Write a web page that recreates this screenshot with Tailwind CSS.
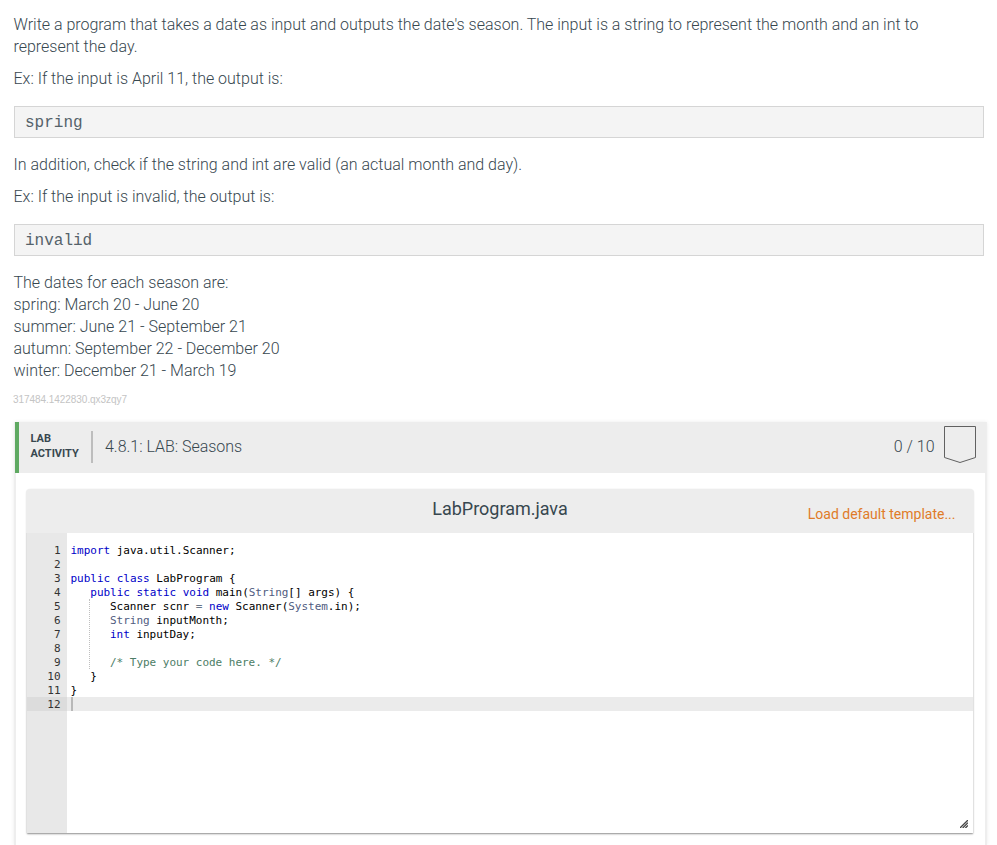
<!DOCTYPE html>
<html lang="en">
<head>
  <meta charset="UTF-8">
  <meta name="viewport" content="width=device-width, initial-scale=1.0">
  <title>4.8.1: LAB: Seasons</title>
  <script src="https://cdn.jsdelivr.net/npm/@tailwindcss/browser@4"></script>
</head>
<body class="bg-white h-[845px] overflow-hidden font-['Roboto',sans-serif] font-light text-base leading-[22px] text-[#37474f]">

  <!-- INSTRUCTIONS -->
  <section class="pt-[14px] pl-[14px] pr-[13px]">
    <p class="mb-2.5 -ml-[0.5px] tracking-[-0.01px]">Write a program that takes a date as input and outputs the date's season. The input is a string to represent the month and an int to<br>represent the day.</p>
    <p class="-ml-[0.5px]">Ex: If the input is April 11, the output is:</p>
    <pre class="my-4 h-8 border border-[#d5d5d5] bg-[#f4f4f4] px-2.5 leading-8 font-normal text-[#55626a] font-['Liberation_Mono',monospace]">spring</pre>
    <p class="mb-2.5 -ml-[0.5px] tracking-[-0.01px]">In addition, check if the string and int are valid (an actual month and day).</p>
    <p class="-ml-[0.5px]">Ex: If the input is invalid, the output is:</p>
    <pre class="my-4 h-8 border border-[#d5d5d5] bg-[#f4f4f4] px-2.5 leading-8 font-normal text-[#55626a] font-['Liberation_Mono',monospace]">invalid</pre>
    <p class="-ml-[0.5px]">
      The dates for each season are:<br>
      spring: March 20 - June 20<br>
      summer: June 21 - September 21<br>
      autumn: September 22 - December 20<br>
      winter: December 21 - March 19
    </p>
    <div class="mt-2.5 -ml-px h-[14px] leading-[15px] text-[10px] tracking-[-0.05px] font-normal font-['Liberation_Sans',sans-serif] text-[#c4c4c4]">317484.1422830.qx3zqy7</div>
  </section>

  <!-- LAB ACTIVITY -->
  <section class="mt-4 ml-[14px] mr-[10px] h-[423px] border-x-2 border-[#eeeeee] shadow-[0_0_4px_rgba(0,0,0,0.08)]">
    <header class="-mx-px h-[51px] flex items-center bg-[#ededed] border-l-4 border-[#5fa962] pl-[11.5px] pr-2.5 pb-0.5">
      <div class="w-[62.5px] h-8 border-r-2 border-[#bdbdbd] text-[11px] leading-[15px] font-bold">LAB<br>ACTIVITY</div>
      <h1 class="ml-3 flex-1 tracking-[-0.02px]">4.8.1: LAB: Seasons</h1>
      <span class="mr-[9.5px]">0 / 10</span>
      <svg class="w-8 h-[38px] -mt-1" viewBox="0 0 32 38" fill="none" stroke="#616161">
        <path d="M.5 .5H31.5V31.5L16 36.5L.5 31.5Z"/>
      </svg>
    </header>

    <div class="mt-4 ml-[11px] mr-3 h-[344px] rounded-t bg-white shadow-[0_1px_2px_rgba(0,0,0,0.45)]">
      <div class="-mx-px h-11 rounded-t bg-[#ededed] grid grid-cols-[1fr_auto_1fr]">
        <h2 class="col-start-2 pt-[9px] text-lg leading-[22px] font-normal tracking-[-0.02px]">LabProgram.java</h2>
        <a class="justify-self-end pt-[14px] pr-[18.5px] text-sm leading-[22px] font-normal text-[#e07b28]" href="#">Load default template...</a>
      </div>

      <div class="relative h-[300px] flex font-normal text-[11px] leading-4 tracking-[-0.022px] font-['DejaVu_Sans_Mono',monospace]">
        <div class="w-10 pt-2.5 bg-[#e8e8e8] text-right text-[#333333]">
          <div class="h-[14px] pr-[6.5px]">1</div>
          <div class="h-[14px] pr-[6.5px]">2</div>
          <div class="h-[14px] pr-[6.5px]">3</div>
          <div class="h-[14px] pr-[6.5px]">4</div>
          <div class="h-[14px] pr-[6.5px]">5</div>
          <div class="h-[14px] pr-[6.5px]">6</div>
          <div class="h-[14px] pr-[6.5px]">7</div>
          <div class="h-[14px] pr-[6.5px]">8</div>
          <div class="h-[14px] pr-[6.5px]">9</div>
          <div class="h-[14px] pr-[6.5px]">10</div>
          <div class="h-[14px] pr-[6.5px]">11</div>
          <div class="h-[14px] pr-[6.5px] bg-[#dcdcdc]">12</div>
        </div>
        <div class="flex-1 pt-2.5 text-black">
          <div class="h-[14px] pl-[3.5px]"><span class="text-[#0000c8]">import</span> java.util.Scanner;</div>
          <div class="h-[14px] pl-[3.5px]"></div>
          <div class="h-[14px] pl-[3.5px]"><span class="text-[#0000c8]">public</span> <span class="text-[#0000c8]">class</span> LabProgram {</div>
          <div class="h-[14px] pl-[23.3px]"><span class="text-[#0000c8]">public</span> <span class="text-[#0000c8]">static</span> <span class="text-[#0000c8]">void</span> main(<span class="text-[#4f5b80]">String</span>[] args) {</div>
          <div class="ml-[22px] border-l border-dotted border-[#bfbfbf] pl-5">
            <div class="h-[14px]">Scanner scnr <span class="text-[#687687]">=</span> <span class="text-[#0000c8]">new</span> Scanner(<span class="text-[#4f5b80]">System</span>.in);</div>
            <div class="h-[14px]"><span class="text-[#4f5b80]">String</span> inputMonth;</div>
            <div class="h-[14px]"><span class="text-[#0000c8]">int</span> inputDay;</div>
            <div class="h-[14px]"></div>
            <div class="h-[14px] text-[#4c7d66]">/* Type your code here. */</div>
          </div>
          <div class="h-[14px] pl-[23.3px]">}</div>
          <div class="h-[14px] pl-[3.5px]">}</div>
          <div class="h-[14px] pl-1 bg-[#ebebeb]"><div class="h-[14px] w-0.5 bg-[#b8b8b8]"></div></div>
        </div>
        <!-- resize grip -->
        <svg class="absolute right-[5px] bottom-[5px] w-2 h-2" viewBox="0 0 8 8" fill="none" stroke="#444444" stroke-width="1.3">
          <path d="M0 8L8 0M2.7 8L8 2.7M5.4 8L8 5.4"/>
        </svg>
      </div>
    </div>
  </section>

</body>
</html>
